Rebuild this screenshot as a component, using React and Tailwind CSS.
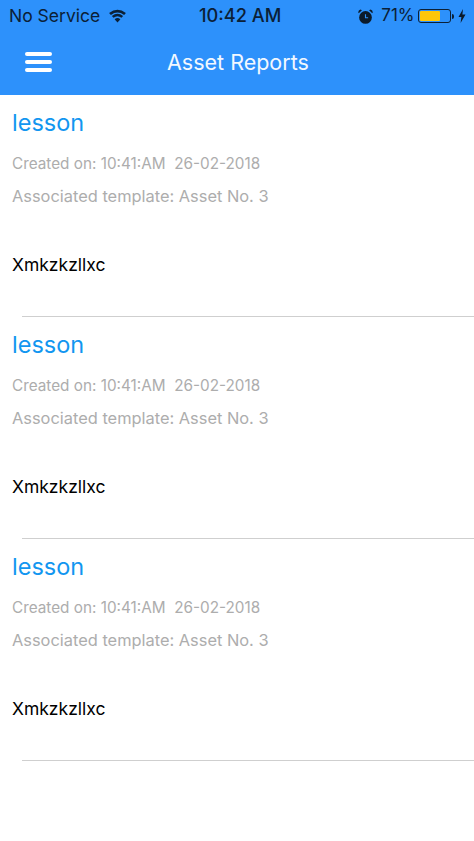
import React from 'react';

const reports = [1, 2, 3];

const WifiIcon = () => (
  <svg viewBox="0 0 20 15" className="w-[19px] h-[14px]" fill="#0b2036">
    <path d="M10 14.5 L6.9 10.9 Q10 8.4 13.1 10.9 Z" />
    <path d="M5.7 9.5 L4 7.6 Q10 2.8 16 7.6 L14.3 9.5 Q10 6 5.7 9.5 Z" />
    <path d="M2.9 6.3 L1 4.3 Q10 -2.6 19 4.3 L17.1 6.3 Q10 1 2.9 6.3 Z" />
  </svg>
);

const AlarmIcon = () => (
  <svg viewBox="0 0 16 16" className="w-[15px] h-[15px]" fill="#0b1a2a">
    <circle cx="8" cy="9" r="6.8" />
    <path d="M0.8 4.4 L4.2 1.4 L2.6 0.6 Q0.4 1.2 0.2 3.4 Z" />
    <path d="M15.2 4.4 L11.8 1.4 L13.4 0.6 Q15.6 1.2 15.8 3.4 Z" />
    <path d="M8 5.5 V9.3 H10.8" fill="none" stroke="#2d91fb" strokeWidth="1.2" />
  </svg>
);

const BatteryIcon = () => (
  <div className="flex items-center">
    <div className="w-[33px] h-[14px] border border-[#0b2036] rounded-[3px] p-[1px]">
      <div className="w-[71%] h-full bg-[#fdc60a] rounded-[1px]"></div>
    </div>
    <div className="w-[2px] h-[5px] bg-[#0b2036] rounded-r-sm ml-[1px]"></div>
  </div>
);

const BoltIcon = () => (
  <svg viewBox="0 0 8 14" className="w-[8px] h-[14px]" fill="#0b1a2a">
    <path d="M5 0 L0.5 8 H3.4 L2.6 14 L7.5 5.6 H4.4 Z" />
  </svg>
);

const ReportItem = () => (
  <div className="h-[222px] flex flex-col">
    <div className="flex-1 pl-3">
      <h2 className="text-[23.5px] leading-[30px] pt-[13px] text-[#1296f0] font-normal">lesson</h2>
      <p className="text-[15.3px] leading-[20px] mt-[16px] text-[#adadad]">Created on: 10:41:AM&nbsp; 26-02-2018</p>
      <p className="text-[16.4px] leading-[20px] mt-[12px] text-[#adadad]">Associated template: Asset No. 3</p>
      <p className="text-[17.5px] leading-[20px] mt-[49px] text-black">Xmkzkzllxc</p>
    </div>
    <div className="ml-[22px] h-px bg-[#cfcfcf]"></div>
  </div>
);

export default function App() {
  return (
    <div className="w-[474px] h-[841px] bg-white font-['Inter','Liberation_Sans',sans-serif] overflow-hidden">
      <header className="h-[95px] bg-[#2d91fb] flex flex-col">
        <div className="h-[32px] flex items-center pl-[9px] text-[#0b2036]">
          <div className="flex items-center gap-[8px] w-[190px]">
            <span className="text-[17.5px]">No Service</span>
            <WifiIcon />
          </div>
          <span className="text-[18.2px] font-medium">10:42 AM</span>
          <div className="ml-[77px] flex items-center">
            <AlarmIcon />
            <span className="text-[17px] ml-[8px]">71%</span>
            <div className="ml-[3px]"><BatteryIcon /></div>
            <div className="ml-[4px]"><BoltIcon /></div>
          </div>
        </div>
        <div className="flex-1 flex items-center pb-[3px]">
          <div className="pl-[25px] w-[167px]">
            <div className="w-[27px] flex flex-col gap-[4px]">
              <div className="h-[4px] rounded-full bg-white"></div>
              <div className="h-[4px] rounded-full bg-white"></div>
              <div className="h-[4px] rounded-full bg-white"></div>
            </div>
          </div>
          <h1 className="text-[21.5px] text-[#f2f8ff] font-normal">Asset Reports</h1>
        </div>
      </header>
      <main>
        {reports.map((id) => (
          <ReportItem key={id} />
        ))}
      </main>
    </div>
  );
}
